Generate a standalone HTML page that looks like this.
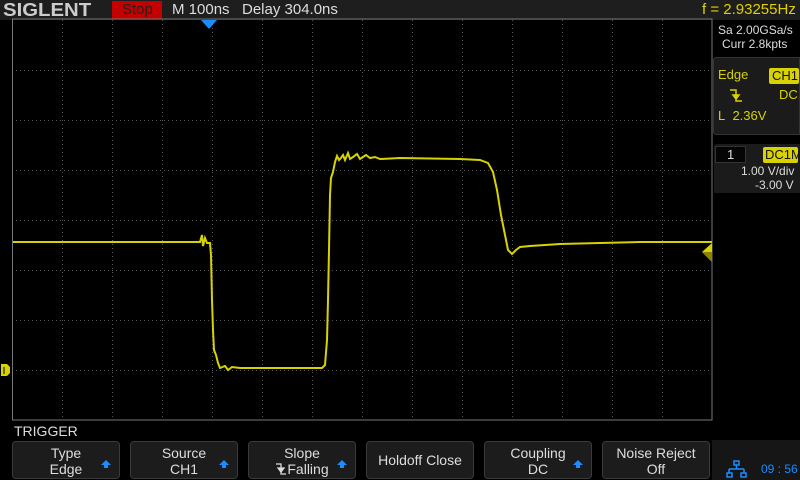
<!DOCTYPE html>
<html><head><style>
*{margin:0;padding:0;box-sizing:border-box}
body{width:800px;height:480px;background:#000;overflow:hidden;position:relative;font-family:"Liberation Sans",sans-serif;color:#ddd}
.top{position:absolute;left:0;top:0;width:800px;height:20px;background:#1e1e1e}
.t{position:absolute;white-space:nowrap}
.btn{position:absolute;top:441px;width:108px;height:38px;background:#1c1c1c;border:1px solid #3a3a3a;border-radius:4px;color:#ddd;font-size:14px;text-align:center;line-height:16px;padding-top:3px}
.ar{position:absolute;right:8px;top:18px;width:0;height:0;border-left:5px solid transparent;border-right:5px solid transparent;border-bottom:5px solid #1a8cff}
.ar:after{content:"";position:absolute;left:-2px;top:5px;width:4px;height:3px;background:#1a8cff}
</style></head><body>
<div class="top"></div>
<div class="t" style="left:3px;top:0px;font-size:18px;font-weight:bold;color:#ccc;transform:scaleX(1.13);transform-origin:left">SIGLENT</div>
<div style="position:absolute;left:112px;top:1px;width:50px;height:18px;background:#c40000"></div>
<div class="t" style="left:122px;top:1px;font-size:15px;color:#222">Stop</div>
<div class="t" style="left:172px;top:1px;font-size:15px;color:#ddd">M 100ns</div>
<div class="t" style="left:242px;top:1px;font-size:15px;color:#ddd">Delay 304.0ns</div>
<div class="t" style="left:702px;top:1px;font-size:15px;color:#e0d000">f = 2.93255Hz</div>
<svg style="position:absolute;left:0;top:0" width="800" height="480">
<g stroke="#555" stroke-width="1" stroke-dasharray="1,3">
<line x1="62.5" y1="20" x2="62.5" y2="420"/><line x1="112.5" y1="20" x2="112.5" y2="420"/><line x1="162.5" y1="20" x2="162.5" y2="420"/><line x1="212.5" y1="20" x2="212.5" y2="420"/><line x1="262.5" y1="20" x2="262.5" y2="420"/><line x1="312.5" y1="20" x2="312.5" y2="420"/><line x1="362.5" y1="20" x2="362.5" y2="420"/><line x1="412.5" y1="20" x2="412.5" y2="420"/><line x1="462.5" y1="20" x2="462.5" y2="420"/><line x1="512.5" y1="20" x2="512.5" y2="420"/><line x1="562.5" y1="20" x2="562.5" y2="420"/><line x1="612.5" y1="20" x2="612.5" y2="420"/><line x1="662.5" y1="20" x2="662.5" y2="420"/>
<line x1="12" y1="70.5" x2="712" y2="70.5"/><line x1="12" y1="120.5" x2="712" y2="120.5"/><line x1="12" y1="170.5" x2="712" y2="170.5"/><line x1="12" y1="220.5" x2="712" y2="220.5"/><line x1="12" y1="270.5" x2="712" y2="270.5"/><line x1="12" y1="320.5" x2="712" y2="320.5"/><line x1="12" y1="370.5" x2="712" y2="370.5"/>
</g>
<rect x="12.5" y="19" width="699.5" height="401" fill="none" stroke="#777" stroke-width="1"/>
<polygon points="201,20 217,20 209,29" fill="#1a8cff"/>
<polyline fill="none" stroke="#d8d200" stroke-width="2" points="13,242 200,242 202,235 203,246 205,238 207,243 210,243 211,255 212,300 213,330 214,350 216,355 218,363 220,368 225,366 228,370 232,367 240,368 322,368 325,365 327,340 328,300 329,250 330,195 331,178 333,172 335,162 337,156 339,160 341,158 343,155 345,160 348,153 350,159 353,157 357,154 360,159 363,157 366,155 370,158 375,157 380,159 400,158 460,159 480,160 488,163 493,172 497,190 501,215 505,235 508,250 512,254 516,250 520,247 530,246 560,244 640,242 712,242"/>
<polygon points="702,252 712,243 712,262" fill="#d8d200"/>
<polygon points="702,252 712,252 712,262" fill="#8a8400"/>
<path d="M1,364 h6 l3,3 v6 l-3,3 h-6 z" fill="#d8d200"/>
<path d="M4,367 v7" stroke="#000" stroke-width="1"/>
</svg>
<div class="t" style="left:718px;top:23px;font-size:12px;color:#ddd">Sa 2.00GSa/s</div>
<div class="t" style="left:722px;top:37px;font-size:12px;color:#ddd">Curr 2.8kpts</div>
<div style="position:absolute;left:713px;top:57px;width:87px;height:78px;background:#1b1b1b;border:1px solid #333;border-radius:3px 0 0 3px"></div>
<div class="t" style="left:718px;top:67px;font-size:13px;color:#d8d200">Edge</div>
<div style="position:absolute;left:769px;top:68px;width:30px;height:16px;background:#d8d200;border-radius:2px"></div>
<div class="t" style="left:772px;top:68px;font-size:13px;color:#111">CH1</div>
<svg style="position:absolute;left:729px;top:88px" width="14" height="16"><g fill="none" stroke="#d8d200" stroke-width="1.5"><path d="M1 2h6v11h6"/><path d="M4 7l3 4l3-4z" fill="#d8d200"/></g></svg>
<div class="t" style="left:779px;top:87px;font-size:13px;color:#d8d200">DC</div>
<div class="t" style="left:718px;top:108px;font-size:13px;color:#d8d200">L&nbsp; 2.36V</div>
<div style="position:absolute;left:714px;top:144px;width:86px;height:49px;background:#1b1b1b;border-radius:3px 0 0 0"></div>
<div style="position:absolute;left:715px;top:146px;width:31px;height:17px;background:#050505;border:1px solid #333"></div>
<div class="t" style="left:727px;top:147px;font-size:13px;color:#ddd">1</div>
<div style="position:absolute;left:763px;top:147px;width:35px;height:16px;background:#d8d200;border-radius:2px"></div>
<div class="t" style="left:765px;top:147px;font-size:13px;color:#111">DC1M</div>
<div class="t" style="left:741px;top:164px;font-size:12px;color:#ddd">1.00 V/div</div>
<div class="t" style="left:755px;top:178px;font-size:12px;color:#ddd">-3.00 V</div>
<div class="t" style="left:14px;top:423px;font-size:14px;color:#ddd">TRIGGER</div>
<div class="btn" style="left:12px">Type<br>Edge<div class="ar"></div></div>
<div class="btn" style="left:130px">Source<br>CH1<div class="ar"></div></div>
<div class="btn" style="left:248px">Slope<br><svg width="12" height="14" style="vertical-align:-2px"><g fill="none" stroke="#ddd" stroke-width="1.3"><path d="M1 2h5v10h5"/><path d="M3 6l3 4l3-4z" fill="#ddd"/></g></svg>Falling<div class="ar"></div></div>
<div class="btn" style="left:366px;line-height:36px;padding-top:0">Holdoff Close</div>
<div class="btn" style="left:484px">Coupling<br>DC<div class="ar"></div></div>
<div class="btn" style="left:602px">Noise Reject<br>Off</div>
<div style="position:absolute;left:712px;top:440px;width:88px;height:40px;background:#161616"></div>
<svg style="position:absolute;left:726px;top:460px" width="22" height="20"><g fill="none" stroke="#1a8cff" stroke-width="1.5"><rect x="8" y="1" width="5" height="4"/><path d="M10.5 5v4M3 9h15M3 9v4M18 9v4"/><rect x="1" y="13" width="5" height="4"/><rect x="15" y="13" width="5" height="4"/></g></svg>
<div class="t" style="left:761px;top:462px;font-size:12px;color:#1a8cff">09 : 56</div>
</body></html>
